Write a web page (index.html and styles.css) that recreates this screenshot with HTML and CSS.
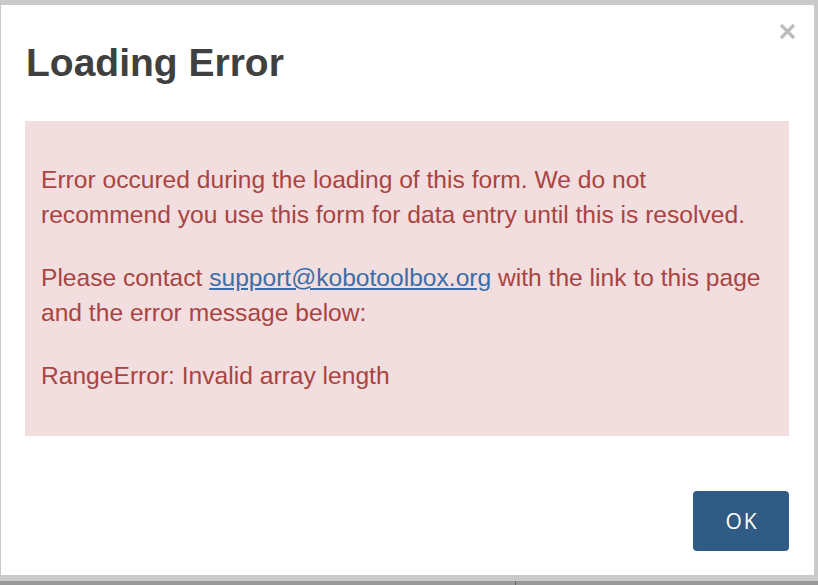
FILE: index.html
```html
<!DOCTYPE html>
<html>
<head>
<meta charset="utf-8">
<link rel="stylesheet" href="styles.css">
</head>
<body>
<div class="page">
  <div class="dialog">
    <div class="header">
      <h1 class="title">Loading Error</h1>
      <button class="close" aria-label="Close">
        <svg width="17" height="17" viewBox="0 0 17 17"><path d="M2 2 L15 15 M15 2 L2 15" stroke="#bdbdbd" stroke-width="3.2" stroke-linecap="butt"/></svg>
      </button>
    </div>
    <div class="alert">
      <p>Error occured during the loading of this form. We do not recommend you use this form for data entry until this is resolved.</p>
      <p>Please contact <a href="#" class="link">support@kobotoolbox.org</a> with the link to this page and the error message below:</p>
      <p>RangeError: Invalid array length</p>
    </div>
    <div class="footer">
      <button class="ok">OK</button>
    </div>
  </div>
  <div class="bottombar">
    <div class="seg left"></div>
    <div class="seg right"></div>
  </div>
</div>
</body>
</html>
```
FILE: styles.css
```css
html, body {
  margin: 0;
  padding: 0;
  height: 100%;
  background: #cacaca;
  overflow: hidden;
}
.page {
  display: flex;
  flex-direction: column;
  height: 585px;
  padding-top: 5px;
  box-sizing: border-box;
}
.dialog {
  margin-left: 1px;
  width: 813px;
  height: 570px;
  background: #fff;
  box-sizing: border-box;
  padding: 0 25px 24px 24px;
  display: flex;
  flex-direction: column;
  font-family: "Liberation Sans", Arial, sans-serif;
}
.header {
  display: flex;
  justify-content: space-between;
  align-items: flex-start;
  height: 116px;
}
.title {
  margin: 0;
  padding-top: 33px;
  padding-left: 1px;
  font-size: 39px;
  line-height: 50px;
  font-weight: bold;
  color: #404040;
}
.close {
  margin-top: 18px;
  margin-right: -7px;
  background: none;
  border: 0;
  padding: 0;
  width: 17px;
  height: 17px;
  display: flex;
}
.alert {
  background: #f2dede;
  color: #a94442;
  padding: 41px 16px 43px 16px;
  font-size: 24.6px;
  line-height: 35px;
}
.alert p {
  margin: 0 0 28px 0;
}
.alert p:last-child {
  margin-bottom: 0;
}
.link {
  color: #3a6ea8;
  text-decoration: underline;
}
.footer {
  margin-top: auto;
  display: flex;
  justify-content: flex-end;
}
.ok {
  width: 96px;
  height: 60px;
  background: #2f5b84;
  border: 0;
  border-radius: 4px;
  color: #fff;
  font-family: "Open Sans", sans-serif;
  font-size: 21px;
  letter-spacing: 2px;
  padding: 0 0 0 2px;
}
.bottombar {
  margin-top: 6px;
  display: flex;
  height: 4px;
}
.seg {
  background: #999;
  height: 4px;
}
.seg.left {
  width: 515px;
  border-right: 1px solid #666;
}
.seg.right {
  flex: 1;
}
```
